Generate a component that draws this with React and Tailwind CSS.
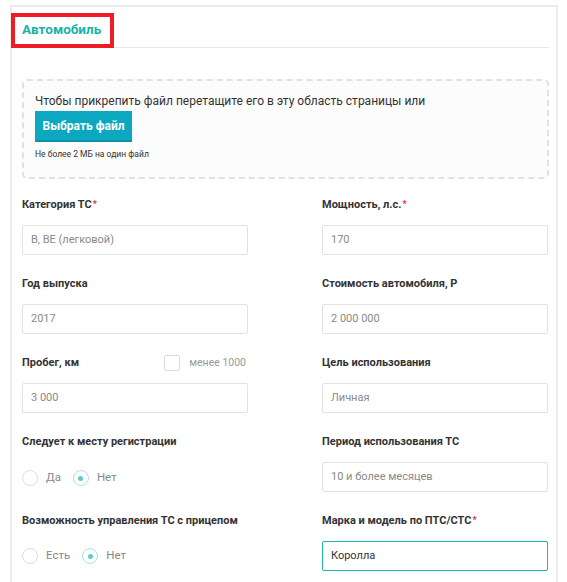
const font = { fontFamily: '"Roboto", "Noto Sans", sans-serif' };

function Label({ children, required, className = "" }) {
  return (
    <div className={`text-[11px] font-bold text-[#333] h-[16px] leading-[16px] ${className}`}>
      {children}
      {required && <span className="text-[#e3262f] text-[9px] align-top relative top-[-1px] ml-px">*</span>}
    </div>
  );
}

function Field({ value, active }) {
  return (
    <div
      className={`h-[30px] rounded-[2px] px-[8px] flex items-center text-[11px] ${
        active ? "border border-[#1ab5a9] text-[#333]" : "border border-[#e2e2e2] text-[#8a8a8a]"
      }`}
    >
      {value}
    </div>
  );
}

function Radio({ label, checked }) {
  return (
    <div className="flex items-center gap-[8px]">
      <span
        className={`w-[16px] h-[16px] rounded-full border flex items-center justify-center ${
          checked ? "border-[#a9e3de]" : "border-[#dedede]"
        }`}
      >
        {checked && <span className="w-[5px] h-[5px] rounded-full bg-[#5fcbc2]" />}
      </span>
      <span className="text-[11.5px] text-[#888]">{label}</span>
    </div>
  );
}

export default function App() {
  return (
    <div className="bg-white w-[567px] h-[582px] overflow-hidden pt-[5px] pl-[10px] pr-[9px]" style={font}>
      <div className="relative border-2 border-b-0 border-[#ececec] h-[600px] pl-[10px] pr-[7px]">
        {/* annotation box round the title */}
        <div className="absolute left-[-1px] top-[6px] w-[103px] h-[35px] border-4 border-[#ee1c25]" />

        <div className="h-[41px] border-b border-[#e8e8e8] flex items-center">
          <span className="text-[13.5px] font-bold text-[#19b3a6] pt-[4px]">Автомобиль</span>
        </div>

        <div className="mt-[31px] rounded-[5px] border-2 border-dashed border-[#d8e4e7] bg-[#fcfcfc] h-[100px] px-[11px] pt-[12px]">
          <div className="text-[12px] text-[#333] leading-[16px]">
            Чтобы прикрепить файл перетащите его в эту область страницы или
          </div>
          <button className="mt-[2px] h-[31px] w-[97px] bg-[#0ba8bf] border-b-2 border-[#0a93a8] text-white text-[12px] font-bold">
            Выбрать файл
          </button>
          <div className="mt-[7px] text-[8.5px] text-[#333] leading-[10px]">Не более 2 МБ на один файл</div>
        </div>

        <div className="grid grid-cols-[226px_226px] gap-x-[74px] mt-[18px]">
          <div className="flex flex-col">
            <Label required>Категория ТС</Label>
            <div className="mt-[12px]"><Field value="В, ВЕ (легковой)" /></div>

            <Label className="mt-[21px]">Год выпуска</Label>
            <div className="mt-[12px]"><Field value="2017" /></div>

            <div className="mt-[21px] flex items-center justify-between h-[16px]">
              <Label>Пробег, км</Label>
              <div className="flex items-center gap-[9px] pr-[2px]">
                <span className="w-[16px] h-[16px] rounded-[2px] border border-[#dcdcdc]" />
                <span className="text-[10.5px] text-[#999]">менее 1000</span>
              </div>
            </div>
            <div className="mt-[12px]"><Field value="3 000" /></div>

            <Label className="mt-[21px]">Следует к месту регистрации</Label>
            <div className="mt-[20px] flex items-center gap-[12px] h-[16px]">
              <Radio label="Да" />
              <Radio label="Нет" checked />
            </div>

            <Label className="mt-[27px]">Возможность управления ТС с прицепом</Label>
            <div className="mt-[19px] flex items-center gap-[12px] h-[16px]">
              <Radio label="Есть" />
              <Radio label="Нет" checked />
            </div>
          </div>

          <div className="flex flex-col">
            <Label required>Мощность, л.с.</Label>
            <div className="mt-[12px]"><Field value="170" /></div>

            <Label className="mt-[21px]">Стоимость автомобиля, Р</Label>
            <div className="mt-[12px]"><Field value="2 000 000" /></div>

            <Label className="mt-[21px]">Цель использования</Label>
            <div className="mt-[12px]"><Field value="Личная" /></div>

            <Label className="mt-[21px]">Период использования ТС</Label>
            <div className="mt-[12px]"><Field value="10 и более месяцев" /></div>

            <Label required className="mt-[21px]">Марка и модель по ПТС/СТС</Label>
            <div className="mt-[12px]"><Field value="Королла" active /></div>
          </div>
        </div>
      </div>
    </div>
  );
}
